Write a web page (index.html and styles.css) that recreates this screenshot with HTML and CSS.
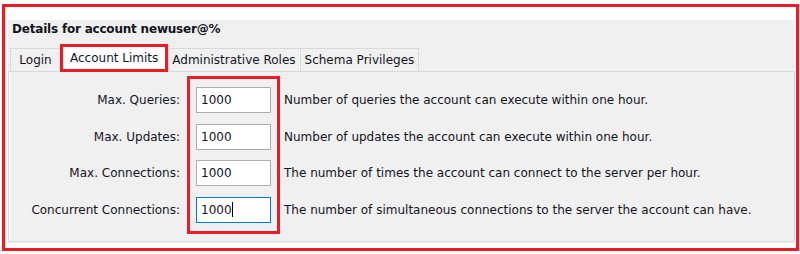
FILE: index.html
```html
<!DOCTYPE html>
<html>
<head>
<meta charset="utf-8">
<link rel="stylesheet" href="styles.css">
</head>
<body>
<div class="frame">
  <div class="dialog">
    <div class="title">Details for account newuser@%</div>
    <div class="tabs">
      <div class="tab tab-login">Login</div>
      <div class="tab active">Account Limits<span class="mark mark-tab"></span></div>
      <div class="tab">Administrative Roles</div>
      <div class="tab">Schema Privileges</div>
    </div>
    <div class="panel">
      <div class="form">
        <div class="label">Max. Queries:</div>
        <div class="field">1000</div>
        <div class="desc">Number of queries the account can execute within one hour.</div>

        <div class="label">Max. Updates:</div>
        <div class="field">1000</div>
        <div class="desc">Number of updates the account can execute within one hour.</div>

        <div class="label">Max. Connections:</div>
        <div class="field">1000</div>
        <div class="desc">The number of times the account can connect to the server per hour.</div>

        <div class="label">Concurrent Connections:</div>
        <div class="field focused">1000<span class="caret"></span></div>
        <div class="desc">The number of simultaneous connections to the server the account can have.</div>
      </div>
      <span class="mark mark-fields"></span>
    </div>
  </div>
</div>
</body>
</html>
```

FILE: styles.css
```css
* { box-sizing: border-box; }
html, body { margin: 0; padding: 0; background: #ffffff; }
body {
  width: 800px;
  height: 254px;
  overflow: hidden;
  font-family: "DejaVu Sans", sans-serif;
  font-size: 12px;
  color: #14141e;
}
.frame {
  margin: 4px 1px 3px 2px;
  height: 247px;
  border: 3px solid #ed1c24;
  padding: 13px 1px 5px 3px;
  background: #ffffff;
}
.dialog {
  height: 100%;
  background: #f0f0f0;
  display: flex;
  flex-direction: column;
}
.title {
  height: 27px;
  padding: 2px 0 0 4px;
  font-weight: bold;
  line-height: 15px;
  letter-spacing: -0.2px;
}
.tabs {
  display: flex;
  align-items: flex-end;
  height: 25px;
  padding-left: 2px;
  position: relative;
  z-index: 1;
  margin-bottom: -1px;
}
.tab {
  height: 24px;
  padding: 0 4px;
  border: 1px solid #d9d9d9;
  background: #f0f0f0;
  line-height: 22px;
  white-space: nowrap;
  text-align: center;
}
.tab-login { min-width: 51px; }
.tab + .tab { margin-left: -1px; }
.tab.active {
  position: relative;
  height: 26px;
  background: #ffffff;
  border-bottom-color: #ffffff;
  margin: 0 -2px 0 -2px;
  padding: 0 10px;
  line-height: 22px;
  z-index: 2;
}
.tab.active + .tab { margin-left: 0; }
.panel {
  position: relative;
  flex: 1;
  margin-bottom: 1px;
  border: 1px solid #d9d9d9;
  box-shadow: inset 1px 0 0 #ffffff;
}
.form {
  display: grid;
  grid-template-columns: 171px 75px auto;
  grid-auto-rows: 26px;
  row-gap: 10.67px;
  align-items: center;
  padding-top: 15px;
}
.label { text-align: right; }
.field {
  margin-left: 16px;
  width: 75px;
  height: 26px;
  border: 1px solid #adadad;
  background: #ffffff;
  padding-left: 4px;
  line-height: 24px;
}
.field.focused { border-color: #0078d7; }
.caret {
  display: inline-block;
  width: 1px;
  height: 15px;
  background: #000000;
  vertical-align: -3px;
}
.desc {
  margin-left: 29px;
  white-space: nowrap;
}
.mark {
  position: absolute;
  border: 3px solid #ed1c24;
  pointer-events: none;
}
.mark-tab {
  left: 0;
  right: 0;
  top: -3px;
  bottom: -1px;
}
.mark-fields {
  left: 178px;
  top: 4px;
  width: 93px;
  height: 158px;
}
```
